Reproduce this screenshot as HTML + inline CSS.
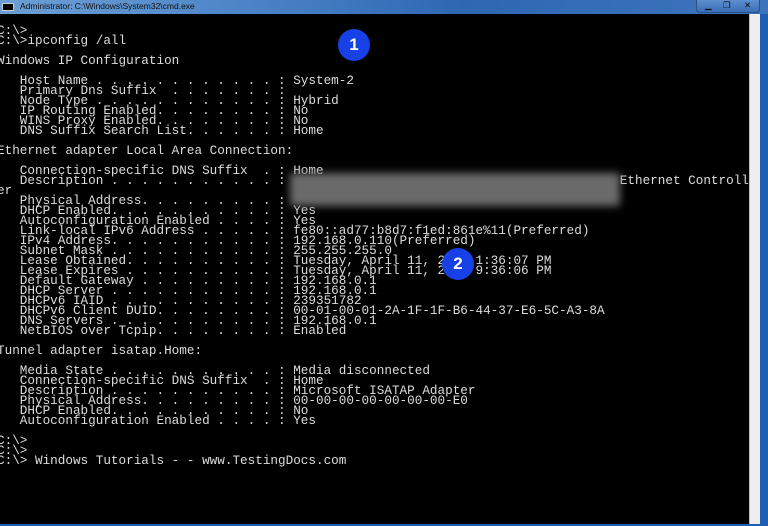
<!DOCTYPE html>
<html><head><meta charset="utf-8"><style>
body{margin:0;width:768px;height:526px;overflow:hidden;background:#1e5fb4;position:relative;font-family:"Liberation Sans",sans-serif}
#title{position:absolute;left:0;top:0;width:768px;height:14px;background:linear-gradient(90deg,#6d9fd6 0%,#4f86c8 30%,#2f67b3 60%,#3d74bb 100%)}
#title span{position:absolute;left:20px;top:1px;font-size:8.5px;color:#111}
#icon{position:absolute;left:2px;top:3px;width:12px;height:8px;background:#000;border:1px solid #ccc;box-sizing:border-box}
#btns{position:absolute;left:696px;top:0;width:64px;height:13px;background:linear-gradient(#5c8fcf,#3a6fb7);border:1px solid #2a4f85;border-top:0;border-radius:0 0 4px 4px;box-sizing:border-box;color:#fff;font-size:9px}
#con{position:absolute;left:0;top:14px;width:749px;height:510px;background:#000;overflow:hidden}
#sb{position:absolute;left:749px;top:14px;width:11px;height:510px;background:#eeeeee;border-left:1px solid #bbb;box-sizing:border-box}
#txt{position:absolute;left:-3px;top:12px;margin:0;font-family:"Liberation Mono",monospace;font-size:12.67px;line-height:10px;color:#dcdcdc;white-space:pre}
.blur{position:absolute;left:290px;top:159px;width:330px;height:33px;background:#6a6a6a;filter:blur(4px)}
.c{position:absolute;width:32px;height:32px;border-radius:50%;background:#1741e6;color:#fff;font-weight:bold;font-size:17px;text-align:center;line-height:32px}
</style></head><body>
<div id="title"><div id="icon"></div><span>Administrator: C:\Windows\System32\cmd.exe</span>
<div id="btns"><span style="position:absolute;left:8px;top:0">▁</span><span style="position:absolute;left:26px;top:0">❐</span><span style="position:absolute;left:47px;top:0">✕</span></div></div>
<div id="con">
<pre id="txt">C:\&gt;
C:\&gt;ipconfig /all

Windows IP Configuration

   Host Name . . . . . . . . . . . . : System-2
   Primary Dns Suffix  . . . . . . . :
   Node Type . . . . . . . . . . . . : Hybrid
   IP Routing Enabled. . . . . . . . : No
   WINS Proxy Enabled. . . . . . . . : No
   DNS Suffix Search List. . . . . . : Home

Ethernet adapter Local Area Connection:

   Connection-specific DNS Suffix  . : Home
   Description . . . . . . . . . . . :                                            Ethernet Controll
er
   Physical Address. . . . . . . . . :
   DHCP Enabled. . . . . . . . . . . : Yes
   Autoconfiguration Enabled . . . . : Yes
   Link-local IPv6 Address . . . . . : fe80::ad77:b8d7:f1ed:861e%11(Preferred)
   IPv4 Address. . . . . . . . . . . : 192.168.0.110(Preferred)
   Subnet Mask . . . . . . . . . . . : 255.255.255.0
   Lease Obtained. . . . . . . . . . : Tuesday, April 11, 2017 1:36:07 PM
   Lease Expires . . . . . . . . . . : Tuesday, April 11, 2017 9:36:06 PM
   Default Gateway . . . . . . . . . : 192.168.0.1
   DHCP Server . . . . . . . . . . . : 192.168.0.1
   DHCPv6 IAID . . . . . . . . . . . : 239351782
   DHCPv6 Client DUID. . . . . . . . : 00-01-00-01-2A-1F-1F-B6-44-37-E6-5C-A3-8A
   DNS Servers . . . . . . . . . . . : 192.168.0.1
   NetBIOS over Tcpip. . . . . . . . : Enabled

Tunnel adapter isatap.Home:

   Media State . . . . . . . . . . . : Media disconnected
   Connection-specific DNS Suffix  . : Home
   Description . . . . . . . . . . . : Microsoft ISATAP Adapter
   Physical Address. . . . . . . . . : 00-00-00-00-00-00-00-E0
   DHCP Enabled. . . . . . . . . . . : No
   Autoconfiguration Enabled . . . . : Yes

C:\&gt;
C:\&gt;
C:\&gt; Windows Tutorials - - www.TestingDocs.com</pre>
<div class="blur"></div>
</div>
<div id="sb"></div>
<div class="c" style="left:338px;top:29px">1</div>
<div class="c" style="left:442px;top:248px">2</div>
</body></html>
